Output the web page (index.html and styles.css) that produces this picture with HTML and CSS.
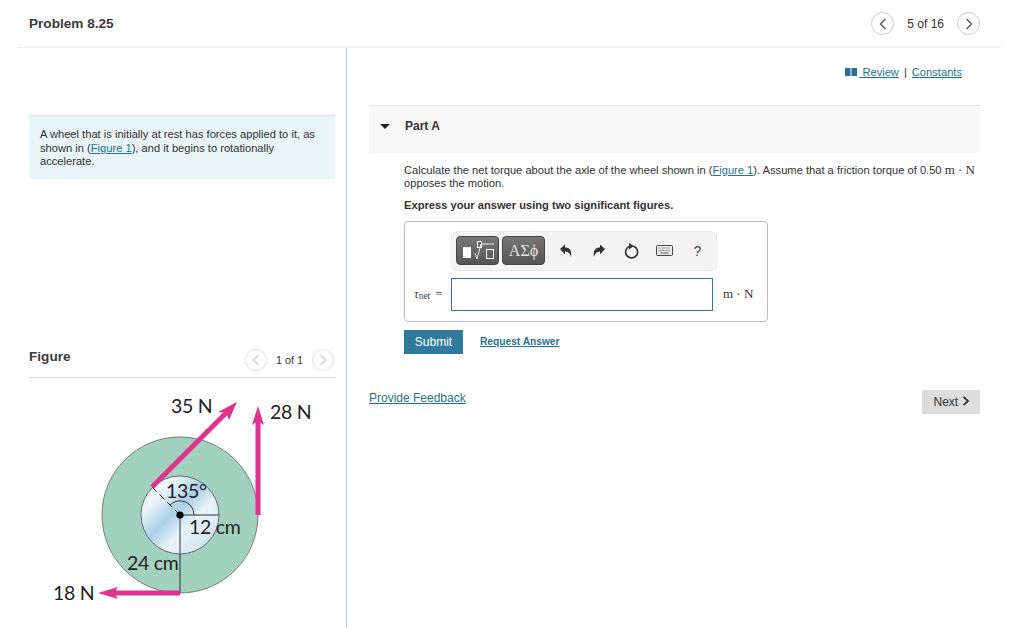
FILE: index.html
```html
<!DOCTYPE html>
<html lang="en">
<head>
<meta charset="utf-8">
<title>Problem 8.25</title>
<link rel="stylesheet" href="styles.css">
</head>
<body>
<div class="app">
  <header class="top">
    <h1 class="title">Problem 8.25</h1>
    <nav class="pager">
      <span class="round"><svg width="8" height="12" viewBox="0 0 8 12"><path d="M6.500 1 1.500 6l5 5" fill="none" stroke="#555" stroke-width="1.300"/></svg></span>
      <span class="pager-text">5 of 16</span>
      <span class="round"><svg width="8" height="12" viewBox="0 0 8 12"><path d="M1.500 1l5 5-5 5" fill="none" stroke="#555" stroke-width="1.300"/></svg></span>
    </nav>
  </header>
  <main class="columns">
    <section class="left">
      <div class="intro">A wheel that is initially at rest has forces applied to it, as shown in (<a class="link" href="#">Figure 1</a>), and it begins to rotationally accelerate.</div>
      <div class="fig-head">
        <h2 class="fig-title">Figure</h2>
        <div class="fig-pager">
          <span class="round small"><svg width="8" height="12" viewBox="0 0 8 12"><path d="M6.500 1 1.500 6l5 5" fill="none" stroke="#ccc" stroke-width="1.200"/></svg></span>
          <span class="fig-count">1 of 1</span>
          <span class="round small"><svg width="8" height="12" viewBox="0 0 8 12"><path d="M1.500 1l5 5-5 5" fill="none" stroke="#ccc" stroke-width="1.200"/></svg></span>
        </div>
      </div>
      <svg class="wheel" width="306" height="250" viewBox="29 378 306 250">
        <defs>
          <linearGradient id="hub" x1="0" y1="0" x2="1" y2="1">
            <stop offset="0" stop-color="#bcdcee"/>
            <stop offset=".22" stop-color="#f2f8fb"/>
            <stop offset=".45" stop-color="#a9d0e8"/>
            <stop offset=".62" stop-color="#e9f3f8"/>
            <stop offset=".8" stop-color="#d8e9f3"/>
            <stop offset="1" stop-color="#9cc8e4"/>
          </linearGradient>
        </defs>
        <circle cx="180" cy="515" r="78" fill="#a3d1bf" stroke="#6d7f7a" stroke-width="1"/>
        <circle cx="180" cy="515" r="39" fill="url(#hub)" stroke="#5f6f6c" stroke-width="1"/>
        <path d="M180 515h39M180 515v78" fill="none" stroke="#333" stroke-width="1"/>
        <path d="M180 515 152 487" fill="none" stroke="#222" stroke-width="1" stroke-dasharray="7 4"/>
        <path d="M194 515a14 14 0 0 0-24-10" fill="none" stroke="#333" stroke-width="1"/>
        <circle cx="180" cy="515" r="3.600" fill="#000"/>
        <path d="M152 487 226 413" fill="none" stroke="#e0338f" stroke-width="5"/>
        <path d="M237 402 218 412 226 413 229 420Z" fill="#e0338f"/>
        <path d="M258 515V420" fill="none" stroke="#e0338f" stroke-width="5"/>
        <path d="M258 406 252 425 258 421 264 425Z" fill="#e0338f"/>
        <path d="M180 593H112" fill="none" stroke="#e0338f" stroke-width="5"/>
        <path d="M98 593 118 587 114 593 118 599Z" fill="#e0338f"/>
        <text class="lbl" x="171" y="413">35 N</text>
        <text class="lbl" x="270" y="419">28 N</text>
        <text class="lbl" x="53" y="600">18 N</text>
        <text class="lbl" x="166" y="498">135°</text>
        <text class="lbl" x="189" y="534">12 cm</text>
        <text class="lbl" x="127" y="570">24 cm</text>
      </svg>
    </section>
    <section class="right">
      <div class="refs">
        <svg class="book" width="12" height="8" viewBox="0 0 12 8"><path d="M0 0h5.500v8H0zM6.500 0H12v8H6.500z" fill="#2a6f8f"/></svg>
        <a class="link" href="#">&nbsp;Review</a><span class="sep">|</span><a class="link" href="#">Constants</a>
      </div>
      <div class="part-head">
        <span class="caret"></span>
        <h2 class="part-title">Part A</h2>
      </div>
      <div class="part-body">
        <p class="q">Calculate the net torque about the axle of the wheel shown in (<a class="link" href="#">Figure 1</a>). Assume that a friction torque of 0.50 <span class="math">m · N</span> opposes the motion.</p>
        <p class="q-bold">Express your answer using two significant figures.</p>
        <div class="answer">
          <div class="toolbar">
            <span class="tool">
              <svg width="38" height="22" viewBox="0 0 38 22"><rect x="4" y="7" width="8" height="11" fill="#fff"/><rect x="18.500" y="1.500" width="4" height="6" fill="none" stroke="#fff"/><path d="M16 13l2 6 4-15h13" fill="none" stroke="#eee" stroke-width="1"/><rect x="27.500" y="9.500" width="7" height="9" fill="none" stroke="#fff"/></svg>
            </span>
            <span class="tool tool-greek">ΑΣϕ</span>
            <span class="slot"><svg width="14" height="14" viewBox="0 0 14 14"><path d="M1 5 6 0.500v3C11 3.500 13 7 12 13 11 9 9 7.500 6 7.500v3z" fill="#333"/></svg></span>
            <span class="slot"><svg width="14" height="14" viewBox="0 0 14 14"><path d="M13 5 8 0.500v3C3 3.500 1 7 2 13 3 9 5 7.500 8 7.500v3z" fill="#333"/></svg></span>
            <span class="slot"><svg width="16" height="16" viewBox="0 0 16 16"><path d="M9.500 3.200A6 6 0 1 1 5 3.500" fill="none" stroke="#333" stroke-width="1.700"/><path d="M5 0v6.500L10 3z" fill="#333"/></svg></span>
            <span class="slot"><svg width="17" height="11" viewBox="0 0 17 11"><rect x=".5" y=".5" width="16" height="10" rx="1" fill="#eee" stroke="#444"/><path d="M2.500 3h12M2.500 5.500h12" stroke="#555" stroke-dasharray="1 1"/><path d="M4.500 8h8" stroke="#555"/></svg></span>
            <span class="slot help">?</span>
          </div>
          <div class="entry">
            <span class="var"><i class="tau">τ</i><span class="net">net</span><span class="eq">=</span></span>
            <input class="field" type="text" aria-label="answer">
            <span class="unit">m · N</span>
          </div>
        </div>
        <div class="actions">
          <button class="submit" type="button">Submit</button>
          <a class="request" href="#">Request Answer</a>
        </div>
      </div>
      <div class="foot">
        <a class="link feedback" href="#">Provide Feedback</a>
        <button class="next" type="button">Next <svg width="8" height="10" viewBox="0 0 8 10"><path d="M1.500 0.800 6 5l-4.500 4.200" fill="none" stroke="#333" stroke-width="1.800"/></svg></button>
      </div>
    </section>
  </main>
</div>
</body>
</html>
```
FILE: styles.css
```css
* { box-sizing: border-box; }
html, body { margin: 0; height: 628px; overflow: hidden; background: #fff; }
body { font-family: "Liberation Sans", Arial, sans-serif; color: #333; font-size: 11.150px; }
h1, h2, p { margin: 0; }
.app { height: 628px; display: flex; flex-direction: column; }

.top {
  height: 48px; margin: 0 22px 0 18px; padding: 0 22px 0 11px;
  display: flex; align-items: center; justify-content: space-between;
  border-bottom: 1px solid #eee;
}
.title { font-size: 13.600px; font-weight: 700; color: #3a3a3a; }
.pager { display: flex; align-items: center; }
.pager-text { font-size: 12px; margin: 0 13px; color: #333; }
.round {
  width: 23px; height: 23px; border: 1px solid #ccc; border-radius: 50%;
  display: flex; align-items: center; justify-content: center; background: #fff;
}
.round.small { width: 22px; height: 22px; border-color: #e4e4e4; }

.columns { flex: 1; display: grid; grid-template-columns: 347px 1fr; min-height: 0; }
.left { border-right: 1px solid #b6cbe0; padding: 67px 11px 0 29px; display: flex; flex-direction: column; }
.intro {
  height: 64px; background: #e9f5f7; border-top: 1px solid #dbe4e8;
  padding: 12px 11px 0; line-height: 13.500px;
}
.link { color: #1f7396; text-decoration: underline; }
.fig-head {
  flex: none; height: 32px; margin-top: 167px; border-bottom: 1px solid #ddd;
  display: flex; align-items: flex-start; justify-content: space-between;
}
.fig-title { font-size: 13.600px; font-weight: 700; color: #3a3a3a; margin-top: 3px; }
.fig-pager { display: flex; align-items: center; margin: 3px 1px 0 0; }
.fig-count { font-size: 10.800px; margin: 0 9px; }
.wheel { display: block; flex: none; }
.lbl { font-family: Lato, sans-serif; font-size: 19.500px; letter-spacing: -0.300px; fill: #222; }

.right { padding: 0 44px 0 22px; display: flex; flex-direction: column; }
.refs {
  height: 57px; padding: 17px 18px 0 0;
  display: flex; align-items: flex-start; justify-content: flex-end; line-height: 14px;
}
.book { margin: 3px 2px 0 0; }
.sep { margin: 0 5px; }
.part-head {
  height: 48px; background: #f8f8f8; border-top: 1px solid #e4e4e4;
  display: flex; align-items: flex-start; padding: 13px 0 0 11px;
}
.caret {
  width: 0; height: 0; margin: 5px 15px 0 0;
  border-left: 5px solid transparent; border-right: 5px solid transparent; border-top: 5px solid #222;
}
.part-title { font-size: 12px; font-weight: 700; color: #333; line-height: 14px; }
.part-body { padding: 10px 0 0 35px; }
.q { line-height: 13px; }
.math { font-family: "Liberation Serif", serif; font-size: 13px; }
.q-bold { font-weight: 700; margin-top: 9px; line-height: 13.500px; }
.answer {
  width: 364px; height: 101px; margin-top: 8px; padding: 9px 0 0 46px;
  border: 1px solid #bbb; border-radius: 4px;
}
.toolbar {
  width: 266px; height: 40px; background: #f4f4f4; border: 1px solid #e6e6e6; border-radius: 6px;
  display: flex; align-items: center; padding: 0 0 0 4px;
}
.tool {
  height: 29px; width: 43px; border-radius: 4px; background: linear-gradient(#777, #555);
  border: 1px solid #444; display: flex; align-items: center; justify-content: center;
  color: #e4e4e4; margin-right: 3px; flex: none;
}
.tool-greek { font-family: "Liberation Serif", serif; font-size: 16px; margin-right: 4px; }
.slot { width: 33px; flex: none; display: flex; align-items: center; justify-content: center; }
.help { font-size: 14px; color: #444; }
.entry { display: flex; align-items: center; height: 33px; margin: 7px 0 0 -37px; }
.var { width: 37px; font-family: "Liberation Serif", serif; color: #444; white-space: nowrap; display: flex; align-items: baseline; }
.tau { font-size: 13px; }
.net { font-size: 9.500px; position: relative; top: 1px; }
.eq { font-size: 12px; margin-left: 5px; }
.field { width: 262px; height: 33px; border: 1px solid #2a7a9c; background: #fff; padding: 0; }
.unit { font-family: "Liberation Serif", serif; font-size: 13px; margin-left: 10px; }
.actions { display: flex; align-items: center; margin-top: 8px; }
.submit {
  width: 59px; height: 24px; background: #2f7a9b; color: #fff; border: 0; padding: 0;
  font: 12px "Liberation Sans", Arial, sans-serif;
}
.request { margin-left: 17px; color: #1f7396; font-size: 10.200px; font-weight: 700; }
.foot { display: flex; justify-content: space-between; align-items: flex-start; margin-top: 36px; }
.feedback { font-size: 12px; line-height: 16px; }
.next {
  width: 58px; height: 24px; background: #ddd; border: 0; color: #333; padding: 0 0 0 1px;
  font: 12px "Liberation Sans", Arial, sans-serif;
}
```
